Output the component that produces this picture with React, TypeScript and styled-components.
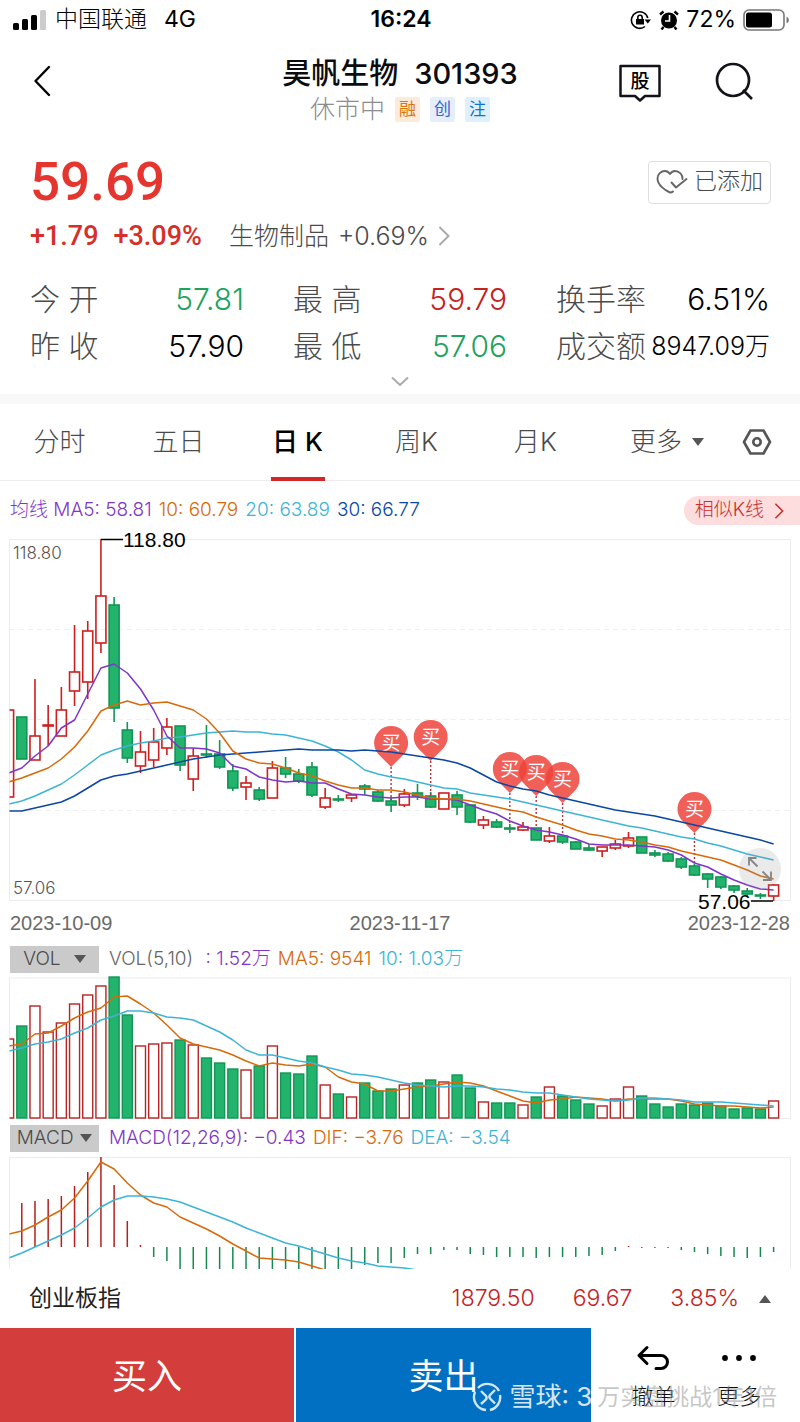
import React from "react";
import styled, { createGlobalStyle } from "styled-components";

const color = {
  ink: "#0c0c10",
  label: "#4a4a4a",
  muted: "#8c8c8c",
  line: "#ececec",
  up: "#c4231f",
  down: "#1fa35c",
  price: "#e5352f",
  change: "#d62e28",
  purple: "#7f35c8",
  orange: "#d76a0a",
  cyan: "#3db4d6",
  blue: "#0a47a3",
  bar: "#22b46d",
  barEdge: "#129655",
  candleUp: "#cc1f1f",
};

const GlobalStyle = createGlobalStyle`
  *, *::before, *::after { box-sizing: border-box; }
  body {
    margin: 0;
    background: #fff;
    color: ${color.ink};
    font-family: Inter, "Noto Sans CJK SC", sans-serif;
    font-weight: 300;
    line-height: 1.2;
  }
  button {
    padding: 0;
    border: 0;
    background: none;
    color: inherit;
    font: inherit;
    cursor: pointer;
  }
  dl, dt, dd, h1, p { margin: 0; }
  svg { display: block; flex: none; }
`;

/* ---------- chart data ---------- */

type Dir = "u" | "d";
type Candle = [Dir, number, number, number, number]; // direction, high, body top, body bottom, low

const STEP = 13.19;
const FIRST_X = 8.6;
const xAt = (i: number) => FIRST_X + i * STEP;

const candles: Candle[] = [
  ["u", 710, 710, 797, 797], ["d", 717, 717, 759, 759], ["u", 679, 736, 760, 760], ["u", 705, 725, 726, 746],
  ["u", 687, 710, 736, 736], ["u", 625, 672, 691, 706], ["u", 621, 631, 682, 699], ["u", 539, 596, 643, 653],
  ["d", 597, 605, 708, 722], ["d", 722, 730, 758, 763], ["u", 731, 752, 766, 773], ["u", 728, 742, 760, 767],
  ["u", 718, 727, 748, 755], ["d", 726, 726, 765, 771], ["u", 748, 756, 779, 791], ["d", 725, 754, 755, 758],
  ["d", 740, 754, 767, 769], ["d", 764, 771, 788, 791], ["u", 776, 783, 787, 800], ["d", 787, 790, 799, 801],
  ["u", 761, 768, 798, 798], ["d", 757, 768, 774, 778], ["d", 769, 774, 781, 783], ["d", 762, 767, 795, 797],
  ["u", 788, 798, 807, 809], ["d", 795, 799, 800, 802], ["u", 795, 795, 798, 802], ["d", 784, 786, 789, 795],
  ["d", 790, 792, 801, 802], ["d", 797, 801, 805, 812], ["u", 789, 794, 805, 807], ["d", 784, 793, 796, 800],
  ["d", 792, 796, 807, 808], ["u", 793, 793, 809, 809], ["d", 791, 795, 807, 815], ["d", 805, 805, 822, 823],
  ["u", 816, 820, 825, 829], ["d", 819, 822, 827, 828], ["d", 824, 828, 829, 833], ["u", 822, 827, 830, 831],
  ["d", 828, 828, 840, 840], ["u", 827, 836, 841, 843], ["d", 835, 836, 842, 844], ["d", 841, 842, 849, 849],
  ["d", 844, 848, 850, 851], ["u", 847, 847, 851, 857], ["u", 840, 844, 848, 850], ["u", 832, 838, 846, 848],
  ["d", 837, 837, 853, 853], ["d", 850, 853, 855, 857], ["d", 852, 854, 861, 862], ["d", 857, 859, 867, 869],
  ["d", 864, 866, 875, 876], ["d", 873, 874, 879, 888], ["d", 876, 877, 887, 889], ["d", 885, 886, 890, 893],
  ["d", 888, 891, 894, 897], ["d", 893, 895, 896, 899], ["u", 884, 885, 896, 901],
];

const priceLines: [string, number[]][] = [
  [color.cyan, [804, 801, 796, 790, 784, 775, 765, 755, 750, 746, 743, 741, 738, 737, 735, 733, 732, 731, 732, 732, 734, 735, 738, 741, 746, 752, 760, 770, 774, 777, 779, 782, 785, 788, 789, 793, 795, 797, 799, 802, 805, 808, 811, 814, 817, 820, 823, 826, 828, 831, 834, 837, 839, 843, 846, 850, 854, 857, 860]],
  [color.blue, [811, 811, 808, 805, 802, 796, 788, 780, 776, 774, 771, 768, 765, 762, 759, 757, 755, 754, 753, 752, 751, 750, 749, 750, 750, 750, 751, 750, 751, 752, 754, 756, 758, 760, 763, 768, 775, 782, 786, 789, 791, 795, 798, 801, 804, 807, 810, 812, 814, 816, 819, 822, 825, 828, 831, 834, 837, 840, 844]],
  [color.purple, [773, 768, 756, 746, 728, 720, 694, 668, 664, 673, 689, 710, 736, 748, 748, 749, 753, 766, 769, 777, 780, 782, 781, 783, 783, 789, 794, 795, 797, 798, 797, 797, 799, 799, 800, 805, 810, 814, 821, 826, 830, 832, 835, 839, 844, 845, 845, 845, 846, 847, 850, 855, 863, 867, 874, 880, 885, 889, 890]],
  [color.orange, [782, 778, 773, 768, 759, 747, 731, 711, 705, 701, 705, 703, 702, 706, 710, 719, 733, 751, 759, 763, 764, 768, 773, 776, 781, 785, 788, 788, 790, 790, 792, 795, 798, 799, 799, 801, 804, 807, 810, 812, 817, 821, 825, 830, 834, 836, 839, 840, 842, 845, 847, 851, 854, 857, 860, 865, 870, 876, 879]],
];

const volumeTops = [
  1039, 1026, 1006, 1032, 1023, 1004, 995, 986, 977, 1015, 1046, 1044, 1043, 1040, 1045, 1058, 1063, 1069, 1070, 1066,
  1046, 1073, 1074, 1056, 1085, 1094, 1097, 1083, 1091, 1089, 1085, 1083, 1080, 1082, 1075, 1088, 1102, 1103, 1103,
  1105, 1097, 1087, 1096, 1100, 1104, 1106, 1099, 1087, 1096, 1104, 1107, 1104, 1105, 1103, 1106, 1109, 1108, 1109, 1101,
];
const volumeUp = new Set([0, 2, 3, 4, 5, 6, 7, 10, 11, 12, 14, 18, 20, 24, 26, 30, 33, 36, 39, 41, 45, 46, 47, 58]);

const volumeLines: [string, number[]][] = [
  [color.orange, [1046, 1044, 1034, 1033, 1026, 1018, 1012, 1008, 997, 996, 1004, 1013, 1025, 1038, 1044, 1047, 1050, 1055, 1061, 1066, 1063, 1065, 1066, 1064, 1067, 1077, 1082, 1084, 1091, 1091, 1089, 1087, 1086, 1084, 1082, 1083, 1086, 1091, 1096, 1101, 1103, 1100, 1099, 1097, 1098, 1099, 1101, 1099, 1099, 1099, 1099, 1101, 1104, 1105, 1106, 1106, 1107, 1108, 1107]],
  [color.cyan, [1051, 1048, 1044, 1042, 1039, 1033, 1028, 1020, 1016, 1011, 1011, 1013, 1017, 1018, 1020, 1026, 1032, 1040, 1050, 1055, 1055, 1058, 1061, 1063, 1067, 1070, 1074, 1075, 1077, 1080, 1083, 1085, 1086, 1087, 1086, 1086, 1087, 1089, 1090, 1092, 1093, 1093, 1095, 1097, 1099, 1100, 1101, 1100, 1098, 1098, 1099, 1100, 1102, 1102, 1102, 1103, 1104, 1105, 1106]],
];

const MACD_ZERO = 1247;
const macdEnds = [
  1247, 1203, 1201, 1199, 1196, 1186, 1172, 1157, 1185, 1221, 1245, 1257, 1261, 1270, 1270, 1270, 1270, 1270, 1270,
  1270, 1270, 1270, 1270, 1270, 1270, 1270, 1270, 1265, 1263, 1263, 1258, 1254, 1254, 1250, 1250, 1254, 1255, 1257,
  1257, 1257, 1258, 1257, 1257, 1257, 1256, 1255, 1251, 1246, 1248, 1248, 1248, 1250, 1252, 1254, 1256, 1257, 1258,
  1257, 1252,
];
const macdLines: [string, number[]][] = [
  [color.orange, [1234, 1231, 1225, 1217, 1210, 1198, 1181, 1162, 1169, 1183, 1195, 1203, 1207, 1217, 1223, 1229, 1236, 1244, 1251, 1258, 1259, 1260, 1262, 1266, 1270]],
  [color.cyan, [1258, 1253, 1247, 1241, 1235, 1228, 1218, 1207, 1200, 1196, 1196, 1197, 1199, 1202, 1207, 1212, 1217, 1222, 1228, 1233, 1238, 1243, 1246, 1250, 1254, 1258, 1261, 1263, 1266, 1267, 1268, 1270]],
];

const buys: [number, number, number][] = [
  [29, 743, 800], [32, 737, 796], [38, 769, 824], [40, 772, 828], [42, 779, 836], [52, 809, 866],
];

/* ---------- chart parts ---------- */

const ChartSvg = styled.svg`
  width: 100%;
  height: auto;
  overflow: visible;
  font-family: Inter, "Noto Sans CJK SC", sans-serif;
`;

function Lines({ series }: { series: [string, number[]][] }) {
  return (
    <g fill="none" strokeWidth="1.5" strokeLinejoin="round">
      {series.map(([stroke, ys]) => (
        <polyline key={stroke} stroke={stroke} points={ys.map((y, i) => `${xAt(i)},${y}`).join(" ")} />
      ))}
    </g>
  );
}

function PriceChart() {
  return (
    <ChartSvg viewBox="0 530 800 374" role="img" aria-label="日K线图">
      <defs>
        <clipPath id="priceClip"><rect x="9.5" y="530" width="781" height="374" /></clipPath>
      </defs>
      <rect x="9.5" y="539.5" width="781" height="361" fill="none" stroke={color.line} />
      <path d="M10 629.5H790M10 719.5H790M10 810.5H790" stroke="#efefef" strokeDasharray="5 4" />
      <g clipPath="url(#priceClip)">
        {candles.map(([dir, high, top, bottom, low], i) => {
          const x = xAt(i);
          const up = dir === "u";
          const edge = up ? color.candleUp : color.barEdge;
          return (
            <g key={i} stroke={edge} strokeWidth="1.6">
              <path d={`M${x} ${high}V${top}M${x} ${bottom}V${low}`} />
              <rect
                x={x - 5}
                y={top}
                width="10"
                height={Math.max(bottom - top, 0.5)}
                fill={up ? "none" : color.bar}
              />
            </g>
          );
        })}
        {buys.map(([i, y, end]) => (
          <g key={i}>
            <path d={`M${xAt(i)} ${y + 24}V${end}`} stroke="#b8333c" strokeWidth="1.4" strokeDasharray="2 2" />
            <path
              transform={`translate(${xAt(i)} ${y})`}
              d="M0 24L-11.500 12.500A17 17 0 1 1 11.500 12.500Z"
              fill="#ee4238"
              fillOpacity="0.84"
            />
            <text x={xAt(i)} y={y + 7} fontSize="19" fontWeight="400" fill="#fff" textAnchor="middle">买</text>
          </g>
        ))}
        <Lines series={priceLines} />
      </g>
      <path d="M101 539.500H123M751 901H773" stroke="#000" strokeWidth="1.4" />
      <g fontFamily="'Liberation Sans', sans-serif" fontWeight="400" fill="#000" fontSize="21">
        <text x="123" y="547">118.80</text>
        <text x="698" y="909">57.06</text>
      </g>
      <g fontWeight="300" fill="#555" fontSize="17">
        <text x="13" y="559">118.80</text>
        <text x="13" y="894">57.06</text>
      </g>
    </ChartSvg>
  );
}

function VolumeChart() {
  return (
    <ChartSvg viewBox="0 976 800 144" role="img" aria-label="成交量">
      <defs>
        <clipPath id="volClip"><rect x="9.5" y="976" width="781" height="144" /></clipPath>
      </defs>
      <rect x="9.5" y="978" width="781" height="140.500" fill="none" stroke={color.line} />
      <g clipPath="url(#volClip)" strokeWidth="1.4">
        {volumeTops.map((top, i) => {
          const up = volumeUp.has(i);
          return (
            <rect
              key={i}
              x={xAt(i) - 5}
              y={top}
              width="10"
              height={1118 - top}
              fill={up ? "#fff" : color.bar}
              stroke={up ? "#b82323" : color.barEdge}
            />
          );
        })}
        <Lines series={volumeLines} />
      </g>
    </ChartSvg>
  );
}

function MacdChart() {
  return (
    <ChartSvg viewBox="0 1157 800 112" role="img" aria-label="MACD">
      <defs>
        <clipPath id="macdClip"><rect x="9.5" y="1157" width="781" height="112" /></clipPath>
      </defs>
      <path d="M9.500 1269V1157.500H790.500V1269" fill="none" stroke={color.line} />
      <g clipPath="url(#macdClip)">
        {macdEnds.map((end, i) => (
          <path
            key={i}
            d={`M${xAt(i)} ${MACD_ZERO}V${end}`}
            stroke={end < MACD_ZERO ? "#b3201f" : "#158a50"}
            strokeWidth="1.5"
          />
        ))}
        <Lines series={macdLines} />
      </g>
    </ChartSvg>
  );
}

/* ---------- page parts ---------- */

const Page = styled.main`
  position: relative;
  display: flex;
  flex-direction: column;
  min-height: 100vh;
  overflow: hidden;
`;

const StatusBar = styled.div`
  display: grid;
  grid-template-columns: 1fr auto 1fr;
  align-items: center;
  height: 40px;
  padding: 0 11px 0 13px;
  font-size: 23px;
  font-weight: 400;
  color: #000;
`;

const StatusGroup = styled.div<{ $end?: boolean }>`
  display: flex;
  align-items: center;
  gap: ${(p) => (p.$end ? "7px" : "9px")};
  justify-content: ${(p) => (p.$end ? "flex-end" : "flex-start")};
`;

const Carrier = styled.span`
  margin-right: 8px;
  font-weight: 300;
`;

const Clock = styled.time`
  font-weight: 600;
`;

const Header = styled.header`
  display: grid;
  grid-template-columns: 1fr auto 1fr;
  height: 90px;
  padding: 0 30px;
`;

const BackButton = styled.button`
  justify-self: start;
  align-self: start;
  margin-top: 24px;
`;

const TitleBlock = styled.div`
  display: flex;
  flex-direction: column;
  align-items: center;
  padding-top: 14px;
`;

const Title = styled.h1`
  display: flex;
  gap: 16px;
  font-size: 29px;
  line-height: 40px;
  font-weight: 500;
`;

const SubTitle = styled.div`
  display: flex;
  align-items: center;
  gap: 10px;
  height: 30px;
  color: ${color.muted};
  font-size: 25px;
`;

const Tag = styled.span<{ $fg: string; $bg: string }>`
  width: 25px;
  height: 25px;
  border-radius: 2px;
  background: ${(p) => p.$bg};
  color: ${(p) => p.$fg};
  font-size: 17px;
  line-height: 25px;
  font-weight: 400;
  text-align: center;
`;

const HeaderActions = styled.div`
  display: flex;
  align-items: flex-start;
  justify-content: flex-end;
  gap: 54px;
  padding: 22px 15px 0 0;
`;

const Quote = styled.section`
  display: grid;
  grid-template-columns: 1fr auto;
  align-items: center;
  padding: 25px 29px 0 30px;
`;

const Price = styled.p`
  color: ${color.price};
  font-family: Roboto, sans-serif;
  font-size: 53px;
  line-height: 54px;
  font-weight: 500;
`;

const AddedButton = styled.button`
  display: flex;
  align-items: center;
  gap: 6px;
  height: 43px;
  padding: 0 7px;
  border: 1px solid #dedede;
  border-radius: 4px;
  color: ${color.label};
  font-size: 23px;
`;

const ChangeRow = styled.div`
  display: flex;
  align-items: center;
  height: 30px;
  padding: 0 30px;
  margin-top: 12px;
`;

const Change = styled.span`
  margin-right: 15px;
  color: ${color.change};
  font-family: Roboto, sans-serif;
  font-size: 27px;
  font-weight: 500;
`;

const Sector = styled.a`
  display: flex;
  align-items: center;
  gap: 9px;
  margin-left: 12px;
  color: ${color.label};
  font-size: 25px;
  text-decoration: none;
`;

const Stats = styled.dl`
  display: grid;
  grid-template-columns: repeat(3, 1fr);
  column-gap: 49px;
  padding: 24px 30px 0;
`;

const Stat = styled.div`
  display: flex;
  align-items: center;
  justify-content: space-between;
  height: 47px;
  font-size: 30px;
  white-space: nowrap;

  dt { color: ${color.label}; }
`;

const StatValue = styled.dd<{ $tone?: "up" | "down"; $small?: boolean }>`
  color: ${(p) => (p.$tone ? color[p.$tone] : "#000")};
  font-size: ${(p) => (p.$small ? "25px" : "30px")};
`;

const Expand = styled.button`
  display: flex;
  align-items: center;
  justify-content: center;
  width: 100%;
  height: 25px;
`;

const Band = styled.div`
  height: 10px;
  background: #f8f8f8;
`;

const Tabs = styled.nav`
  display: grid;
  grid-template-columns: repeat(5, 119fr) 144fr 61fr;
  height: 77px;
  border-bottom: 1px solid ${color.line};
`;

const Tab = styled.button<{ $active?: boolean }>`
  display: flex;
  position: relative;
  align-items: center;
  justify-content: center;
  gap: 10px;
  color: ${(p) => (p.$active ? "#000" : color.label)};
  font-size: 26px;
  font-weight: ${(p) => (p.$active ? 500 : 300)};

  &::after {
    content: "";
    position: absolute;
    bottom: -1px;
    width: 54px;
    height: 4px;
    background: ${(p) => (p.$active ? "#d32626" : "transparent")};
  }
`;

const SettingsButton = styled.button`
  padding-left: 3px;
`;

const Legend = styled.div<{ $height: number }>`
  display: flex;
  align-items: center;
  gap: 7px;
  height: ${(p) => p.$height}px;
  padding-left: 10px;
  font-size: 19px;
  white-space: nowrap;
`;

const MaLegend = styled(Legend)`
  padding-top: 10px;
`;

const LegendItem = styled.span<{ $color: string }>`
  color: ${(p) => p.$color};
`;

const SimilarButton = styled.button`
  display: flex;
  align-items: center;
  gap: 10px;
  height: 29px;
  margin-left: auto;
  padding: 0 16px 0 11px;
  border-radius: 15px 0 0 15px;
  background: #fddddd;
  color: #c9302c;
  font-size: 19px;
`;

const ChartBox = styled.div`
  position: relative;
`;

const ZoomButton = styled.button`
  position: absolute;
  right: 19px;
  bottom: 14px;
  display: grid;
  place-items: center;
  width: 42px;
  height: 42px;
  border-radius: 50%;
  background: rgba(150, 150, 150, 0.2);
`;

const Dates = styled.div`
  display: flex;
  justify-content: space-between;
  align-items: center;
  height: 38px;
  padding: 0 10px;
  color: #6a6a6a;
  font-family: "Liberation Sans", sans-serif;
  font-size: 20px;
`;

const IndicatorButton = styled.button`
  display: flex;
  align-items: center;
  justify-content: space-evenly;
  width: 89px;
  height: 27px;
  margin-right: 3px;
  background: #cacaca;
  color: ${color.label};
  font-size: 19px;
`;

const IndexBar = styled.div`
  display: flex;
  align-items: center;
  height: 59px;
  padding: 0 29px;
  font-size: 23px;
  white-space: nowrap;
`;

const IndexName = styled.span`
  margin-right: auto;
  font-weight: 400;
  color: #222;
`;

const IndexValue = styled.span`
  margin-left: 38px;
  color: ${color.up};
`;

const IndexToggle = styled.button`
  margin-left: 20px;
`;

const ActionBar = styled.footer`
  display: grid;
  grid-template-columns: 295fr 295fr 208fr;
  column-gap: 2px;
  height: 95px;
`;

const TradeButton = styled.button<{ $bg: string }>`
  background: ${(p) => p.$bg};
  color: #fff;
  font-size: 35px;
  font-weight: 400;
`;

const MoreActions = styled.div`
  display: flex;
  padding: 0 18px;
`;

const ActionButton = styled.button`
  display: flex;
  flex: 1;
  flex-direction: column;
  align-items: center;
  gap: 8px;
  padding-top: 16px;
  font-size: 22px;
  line-height: 32px;
`;

const Watermark = styled.div`
  position: absolute;
  right: 23px;
  bottom: 8px;
  display: flex;
  align-items: center;
  gap: 5px;
  color: #d3e6f5;
  font-size: 26px;
  line-height: 36px;
  font-weight: 400;
  white-space: nowrap;
  pointer-events: none;
`;

const WatermarkTail = styled.span`
  color: rgba(150, 150, 150, 0.55);
  font-size: 23px;
`;

const Chevron = ({ stroke, w = 12, h = 20 }: { stroke: string; w?: number; h?: number }) => (
  <svg width={w} height={h} viewBox="0 0 12 20" fill="none" stroke={stroke} strokeWidth="2">
    <path d="M1.500 1L10.500 10L1.500 19" />
  </svg>
);

const Triangle = ({ up }: { up?: boolean }) => (
  <svg width="12" height="9" viewBox="0 0 12 9" fill="#555">
    <path d={up ? "M6 1L12 9H0Z" : "M0 0H12L6 8Z"} />
  </svg>
);

const stats: { label: string; value: string; tone?: "up" | "down"; small?: boolean }[] = [
  { label: "今 开", value: "57.81", tone: "down" },
  { label: "最 高", value: "59.79", tone: "up" },
  { label: "换手率", value: "6.51%" },
  { label: "昨 收", value: "57.90" },
  { label: "最 低", value: "57.06", tone: "down" },
  { label: "成交额", value: "8947.09万", small: true },
];

export default function App() {
  return (
    <>
      <GlobalStyle />
      <Page>
        <StatusBar>
          <StatusGroup>
            <svg width="33" height="21" viewBox="0 0 33 21">
              <rect x="0" y="13" width="6" height="7" rx="1.500" />
              <rect x="9" y="9" width="6" height="11" rx="1.500" />
              <rect x="18" y="5" width="6" height="15" rx="1.500" />
              <rect x="27" y="0" width="6" height="20" rx="1.500" fill="#ccc" />
            </svg>
            <Carrier>中国联通</Carrier>
            <span>4G</span>
          </StatusGroup>
          <Clock>16:24</Clock>
          <StatusGroup $end>
            <svg width="22" height="20" viewBox="0 0 22 20" fill="none" stroke="#000" strokeWidth="1.600">
              <path d="M17.800 8A8.300 8.300 0 1 0 15 16.500" />
              <path d="M14.500 9.500H21L17.800 13.500Z" fill="#000" stroke="none" />
              <rect x="6" y="9" width="8" height="5.500" fill="#000" stroke="none" />
              <path d="M7.800 9V7.500A2.200 2.200 0 0 1 12.200 7.500V9" />
            </svg>
            <svg width="20" height="20" viewBox="0 0 20 20">
              <circle cx="10" cy="10.500" r="8" />
              <path d="M1 4.500L4.500 1.500M19 4.500L15.500 1.500M4.500 17L2.500 19.500M15.500 17L17.500 19.500" stroke="#000" strokeWidth="2.400" />
              <path d="M10.500 5V11H6" fill="none" stroke="#fff" strokeWidth="1.600" />
            </svg>
            <span>72%</span>
            <svg width="46" height="22" viewBox="0 0 46 22">
              <rect x="1" y="1" width="40" height="20" rx="5" fill="none" stroke="#777" strokeWidth="1.600" />
              <rect x="3" y="3.500" width="26" height="15" rx="2.500" />
              <path d="M43.500 7.500Q46 9 46 11T43.500 14.500Z" fill="#777" />
            </svg>
          </StatusGroup>
        </StatusBar>

        <Header>
          <BackButton aria-label="返回">
            <svg width="24" height="34" viewBox="0 0 24 34" fill="none" stroke="#000" strokeWidth="2.400" strokeLinecap="round" strokeLinejoin="round">
              <path d="M19 3L5.500 17L19 31" />
            </svg>
          </BackButton>
          <TitleBlock>
            <Title>
              <span>昊帆生物</span>
              <span>301393</span>
            </Title>
            <SubTitle>
              <span>休市中</span>
              <Tag $fg="#d6740f" $bg="#fcebd9">融</Tag>
              <Tag $fg="#3367cf" $bg="#e6eefb">创</Tag>
              <Tag $fg="#1273c9" $bg="#def0fd">注</Tag>
            </SubTitle>
          </TitleBlock>
          <HeaderActions>
            <button aria-label="股吧">
              <svg width="42" height="40" viewBox="0 0 42 40">
                <path d="M1.500 4H40.500V34H26L21 38.500L16 34H1.500Z" fill="none" stroke="#111318" strokeWidth="2.500" strokeLinejoin="round" />
                <text x="21" y="26" textAnchor="middle" fontSize="19" fontWeight="500">股</text>
              </svg>
            </button>
            <button aria-label="搜索">
              <svg width="40" height="40" viewBox="0 0 40 40" fill="none" stroke="#111318" strokeWidth="2.700">
                <circle cx="18" cy="18" r="16" />
                <path d="M28 28L37 37" />
              </svg>
            </button>
          </HeaderActions>
        </Header>

        <Quote>
          <Price>59.69</Price>
          <AddedButton>
            <svg width="32" height="26" viewBox="0 0 32 26" fill="none" stroke="#666" strokeWidth="1.900" strokeLinecap="round" strokeLinejoin="round">
              <path d="M26.500 10C27 5.500 23 2 19 2C16.500 2 15 3.500 14 5C13 3.500 11.500 2 9 2C5 2 1.500 5 1.500 9.500C1.500 16 9 21.500 14 23.500C15 23.500 16.500 23 17 22.500" />
              <path d="M15.500 13.500L20 18.500L30.500 10" />
            </svg>
            已添加
          </AddedButton>
        </Quote>
        <ChangeRow>
          <Change>+1.79</Change>
          <Change>+3.09%</Change>
          <Sector href="#sector">
            <span>生物制品</span>
            <span>+0.69%</span>
            <Chevron stroke="#aaa" />
          </Sector>
        </ChangeRow>

        <Stats>
          {stats.map((s) => (
            <Stat key={s.label}>
              <dt>{s.label}</dt>
              <StatValue $tone={s.tone} $small={s.small}>{s.value}</StatValue>
            </Stat>
          ))}
        </Stats>
        <Expand aria-label="展开">
          <svg width="18" height="11" viewBox="0 0 18 11" fill="none" stroke="#aaa" strokeWidth="2">
            <path d="M1 1.500L9 9L17 1.500" />
          </svg>
        </Expand>
        <Band />

        <Tabs>
          <Tab>分时</Tab>
          <Tab>五日</Tab>
          <Tab $active>日 K</Tab>
          <Tab>周K</Tab>
          <Tab>月K</Tab>
          <Tab>更多 <Triangle /></Tab>
          <SettingsButton aria-label="设置">
            <svg width="30" height="28" viewBox="0 0 30 28" fill="none" stroke="#555" strokeWidth="2.600" strokeLinejoin="round">
              <path d="M8.500 2.500H21.500L28 14L21.500 25.500H8.500L2 14Z" />
              <circle cx="15" cy="14" r="3.700" />
            </svg>
          </SettingsButton>
        </Tabs>

        <MaLegend $height={49}>
          <LegendItem $color={color.purple}>均线 MA5: 58.81</LegendItem>
          <LegendItem $color={color.orange}>10: 60.79</LegendItem>
          <LegendItem $color={color.cyan}>20: 63.89</LegendItem>
          <LegendItem $color={color.blue}>30: 66.77</LegendItem>
          <SimilarButton>
            相似K线
            <Chevron stroke="#c9302c" w={10} h={16} />
          </SimilarButton>
        </MaLegend>
        <ChartBox>
          <PriceChart />
          <ZoomButton aria-label="全屏">
            <svg width="26" height="26" viewBox="0 0 26 26" fill="none" stroke="#858585" strokeWidth="1.800">
              <path d="M10.500 10.500L2 2M2 9.500V2H9.500M15.500 15.500L24 24M24 15.500V24H16" />
            </svg>
          </ZoomButton>
        </ChartBox>
        <Dates>
          <span>2023-10-09</span>
          <span>2023-11-17</span>
          <span>2023-12-28</span>
        </Dates>

        <Legend $height={34}>
          <IndicatorButton>VOL <Triangle /></IndicatorButton>
          <LegendItem $color="#666">VOL(5,10)</LegendItem>
          <LegendItem $color={color.purple}>&nbsp;: 1.52万</LegendItem>
          <LegendItem $color={color.orange}>MA5: 9541</LegendItem>
          <LegendItem $color={color.cyan}>10: 1.03万</LegendItem>
        </Legend>
        <VolumeChart />
        <Legend $height={37}>
          <IndicatorButton>MACD <Triangle /></IndicatorButton>
          <LegendItem $color={color.purple}>MACD(12,26,9): −0.43</LegendItem>
          <LegendItem $color={color.orange}>DIF: −3.76</LegendItem>
          <LegendItem $color={color.cyan}>DEA: −3.54</LegendItem>
        </Legend>
        <MacdChart />

        <IndexBar>
          <IndexName>创业板指</IndexName>
          <IndexValue>1879.50</IndexValue>
          <IndexValue>69.67</IndexValue>
          <IndexValue>3.85%</IndexValue>
          <IndexToggle aria-label="展开指数"><Triangle up /></IndexToggle>
        </IndexBar>
        <ActionBar>
          <TradeButton $bg="#d33d3b">买入</TradeButton>
          <TradeButton $bg="#0270c2">卖出</TradeButton>
          <MoreActions>
            <ActionButton>
              <svg width="34" height="28" viewBox="0 0 34 28" fill="none" stroke="#000" strokeWidth="3" strokeLinecap="round" strokeLinejoin="round">
                <path d="M11 3.500L3 11.500L11 19.500M3 11.500H25A6.500 6.500 0 0 1 25 24.500H20" />
              </svg>
              撤单
            </ActionButton>
            <ActionButton>
              <svg width="36" height="28" viewBox="0 0 36 28">
                <circle cx="4" cy="14" r="2.900" />
                <circle cx="18" cy="14" r="2.900" />
                <circle cx="32" cy="14" r="2.900" />
              </svg>
              更多
            </ActionButton>
          </MoreActions>
        </ActionBar>
        <Watermark>
          <svg width="32" height="30" viewBox="0 0 32 30" fill="none" stroke="#d3e6f5" strokeWidth="2.400">
            <path d="M6 6A13 13 0 0 1 27 9M28 13A13 13 0 0 1 18 28M14 28A13 13 0 0 1 3 10" />
            <path d="M9 9L14 14Q15.500 16 13.500 18L9 22M23 8L18 13Q16.500 15 18.500 17L23 21.500" />
          </svg>
          <span>雪球: 3</span>
          <WatermarkTail>万实盘挑战1年1倍</WatermarkTail>
        </Watermark>
      </Page>
    </>
  );
}
